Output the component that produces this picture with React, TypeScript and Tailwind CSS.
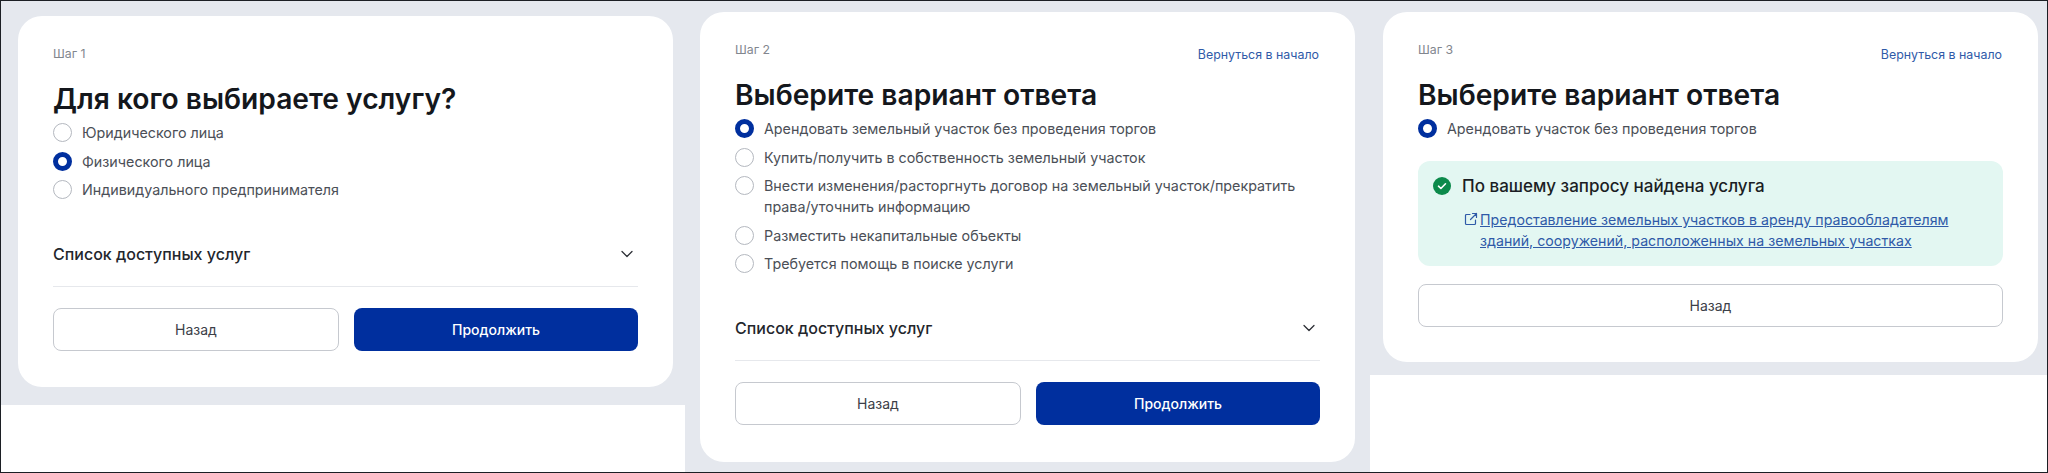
import { ChevronDown } from "lucide-react";

const FONT = "font-['Inter','Noto_Sans',sans-serif]";

function Radio({ label, checked }: { label: string; checked?: boolean }) {
  return (
    <div className="flex items-start gap-[10px]">
      {checked ? (
        <span className="mt-[1px] h-[19px] w-[19px] shrink-0 rounded-full border-[5px] border-[#002f9e] bg-white" />
      ) : (
        <span className="mt-[1px] h-[19px] w-[19px] shrink-0 rounded-full border border-[#b4b8bf] bg-white" />
      )}
      <span className="text-[14.3px] leading-[21px] text-[#4b4f57]">{label}</span>
    </div>
  );
}

function StepHead({ step, title, back }: { step: string; title: string; back?: boolean }) {
  return (
    <>
      <div className="flex h-[18px] items-start justify-between">
        <span className="mt-[1px] text-[12.3px] leading-[18px] text-[#82868e]">{step}</span>
        {back && (
          <a className="mr-[1px] mt-[6px] text-[12.4px] leading-[18px] text-[#2f5aa8]">Вернуться в начало</a>
        )}
      </div>
      <h2 className="mt-[19px] text-[28.2px] font-semibold leading-[36px] text-[#14171c]">{title}</h2>
    </>
  );
}

function Accordion() {
  return (
    <div className="flex h-[66px] items-center justify-between border-b border-[#e6e8ec]">
      <span className="text-[16px] font-medium text-[#23262c]">Список доступных услуг</span>
      <ChevronDown className="mr-[1px] h-5 w-5 text-[#2b2e34]" strokeWidth={1.5} />
    </div>
  );
}

function Buttons() {
  return (
    <div className="mt-[21px] flex gap-[15px]">
      <button className="h-[43px] flex-1 rounded-lg border border-[#c6c9cf] bg-white text-[14px] text-[#3c4048]">
        Назад
      </button>
      <button className="h-[43px] flex-1 rounded-lg bg-[#002f9e] text-[14px] font-medium text-white">
        Продолжить
      </button>
    </div>
  );
}

export default function App() {
  return (
    <div className={`flex h-[473px] w-[2048px] items-start overflow-hidden border border-[#1c1f24] bg-white ${FONT}`}>
      {/* Step 1 */}
      <div className="h-[404px] w-[684px] shrink-0 bg-[#e5e8ee] pl-[17px] pt-[15px]">
        <div className="h-[371px] w-[655px] rounded-[24px] bg-white px-[35px] pt-[28px]">
          <StepHead step="Шаг 1" title="Для кого выбираете услугу?" />
          <div className="mt-[5px] flex flex-col gap-[7.5px]">
            <Radio label="Юридического лица" />
            <Radio label="Физического лица" checked />
            <Radio label="Индивидуального предпринимателя" />
          </div>
          <div className="mt-[21px]">
            <Accordion />
          </div>
          <Buttons />
        </div>
      </div>

      {/* Step 2 */}
      <div className="h-[471px] w-[685px] shrink-0 bg-[#e5e8ee] pl-[15px] pt-[11px]">
        <div className="h-[450px] w-[655px] rounded-[24px] bg-white px-[35px] pt-[28px]">
          <StepHead step="Шаг 2" title="Выберите вариант ответа" back />
          <div className="mt-[5px] flex flex-col gap-[7.5px]">
            <Radio label="Арендовать земельный участок без проведения торгов" checked />
            <Radio label="Купить/получить в собственность земельный участок" />
            <Radio label="Внести изменения/расторгнуть договор на земельный участок/прекратить права/уточнить информацию" />
            <Radio label="Разместить некапитальные объекты" />
            <Radio label="Требуется помощь в поиске услуги" />
          </div>
          <div className="mt-[21px]">
            <Accordion />
          </div>
          <Buttons />
        </div>
      </div>

      {/* Step 3 */}
      <div className="h-[374px] flex-1 bg-[#e5e8ee] pl-[13px] pt-[11px]">
        <div className="h-[350px] w-[655px] rounded-[24px] bg-white px-[35px] pt-[28px]">
          <StepHead step="Шаг 3" title="Выберите вариант ответа" back />
          <div className="mt-[5px]">
            <Radio label="Арендовать участок без проведения торгов" checked />
          </div>
          <div className="mt-[22px] h-[105px] rounded-xl bg-[#e3f7f2] pl-[15px] pt-[13px]">
            <div className="flex items-center gap-[11px]">
              <svg viewBox="0 0 18 18" className="h-[18px] w-[18px] shrink-0">
                <circle cx="9" cy="9" r="9" fill="#0c8a4b" />
                <path d="M5.5 9.2l2.4 2.3 4.6-4.7" fill="none" stroke="#fff" strokeWidth="1.6" strokeLinecap="round" strokeLinejoin="round" />
              </svg>
              <span className="text-[17px] font-medium leading-[24px] text-[#1b1e24]">По вашему запросу найдена услуга</span>
            </div>
            <div className="ml-[31px] mt-[11px] flex items-start gap-[2px]">
              <svg viewBox="0 0 14 14" className="mt-[3px] h-[14px] w-[14px] shrink-0" fill="none" stroke="#2f5aa8" strokeWidth="1.2" strokeLinecap="round" strokeLinejoin="round">
                <path d="M6 2.5H2.5a1 1 0 0 0-1 1v8a1 1 0 0 0 1 1h8a1 1 0 0 0 1-1V8" />
                <path d="M8.5 1.5h4v4M12.5 1.5L6.5 7.5" />
              </svg>
              <a className="w-[490px] text-[14.2px] leading-[21px] text-[#2f5aa8] underline">
                Предоставление земельных участков в аренду правообладателям зданий, сооружений, расположенных на земельных участках
              </a>
            </div>
          </div>
          <button className="mt-[18px] h-[43px] w-full rounded-lg border border-[#c6c9cf] bg-white text-[14px] text-[#3c4048]">
            Назад
          </button>
        </div>
      </div>
    </div>
  );
}
